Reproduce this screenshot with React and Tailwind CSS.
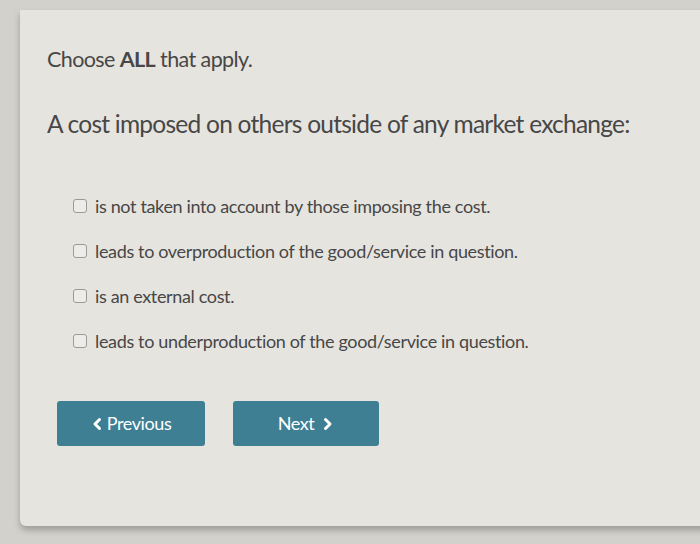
import React from 'react';

const options = [
  'is not taken into account by those imposing the cost.',
  'leads to overproduction of the good/service in question.',
  'is an external cost.',
  'leads to underproduction of the good/service in question.',
];

export default function App() {
  return (
    <div
      className="w-[700px] h-[544px] overflow-hidden bg-[#d3d1cc] pt-[10px] pl-[20px]"
      style={{ fontFamily: 'Lato, "Liberation Sans", sans-serif' }}
    >
      <div className="w-[700px] h-[516px] bg-[#e6e4df] rounded-bl-[6px] shadow-[0_4px_6px_rgba(0,0,0,0.25)] pl-[27px] pt-[34px] text-[#474747]">
        <p className="text-[21.5px] leading-[30px] tracking-[-0.6px]">
          Choose <span className="font-bold">ALL</span> that apply.
        </p>

        <h1 className="mt-[33px] text-[24.5px] leading-[34px] tracking-[-0.75px]">
          A cost imposed on others outside of any market exchange:
        </h1>

        {/* Answers */}
        <div className="mt-[53px] pl-[26px] flex flex-col gap-[21px]">
          {options.map((o) => (
            <label key={o} className="flex items-center gap-[8px] text-[18px] leading-[24px] tracking-[-0.35px]">
              <span className="w-[14px] h-[14px] rounded-[3px] border border-[#9a9a98] bg-[#eeece8]" />
              {o}
            </label>
          ))}
        </div>

        {/* Nav buttons */}
        <div className="mt-[48px] pl-[10px] flex gap-[28px]">
          <button className="w-[148px] h-[45px] rounded-[3px] bg-[#3e7f94] text-white text-[18px] tracking-[-0.4px] flex items-center justify-center gap-[4px]">
            <svg width="12" height="14" viewBox="0 0 12 14" fill="none" stroke="currentColor" strokeWidth="3" strokeLinecap="round" strokeLinejoin="round">
              <path d="M8.5 2.5 4 7l4.5 4.5" />
            </svg>
            Previous
          </button>
          <button className="w-[146px] h-[45px] rounded-[3px] bg-[#3e7f94] text-white text-[18px] tracking-[-0.4px] flex items-center justify-center gap-[8px]">
            Next
            <svg width="12" height="14" viewBox="0 0 12 14" fill="none" stroke="currentColor" strokeWidth="3" strokeLinecap="round" strokeLinejoin="round">
              <path d="M3.5 2.5 8 7l-4.5 4.5" />
            </svg>
          </button>
        </div>
      </div>
    </div>
  );
}
